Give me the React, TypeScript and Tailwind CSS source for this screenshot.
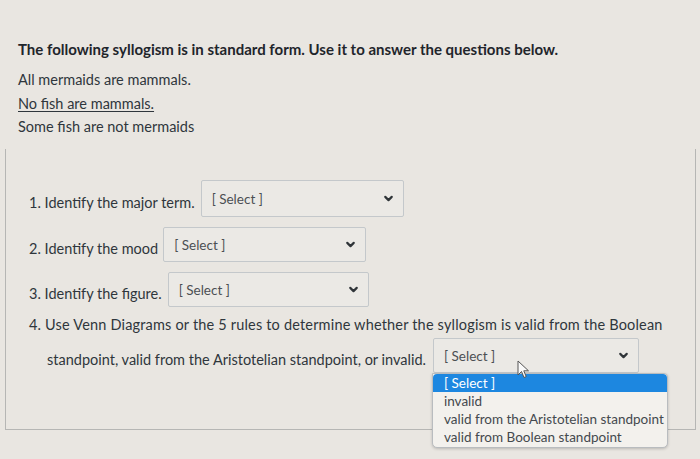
import { ChevronDown } from "lucide-react";

function SelectBox({ width, height }: { width: number; height: number }) {
  return (
    <div
      className="flex items-center justify-between border border-[#c4c8cb] bg-[#ebe9e5] rounded-[2px] pl-[10px] pr-[8px] shrink-0"
      style={{ width, height }}
    >
      <span className="text-[13.5px] text-[#4b4f53] mt-[2px]">[ Select ]</span>
      <ChevronDown size={13} strokeWidth={4} className="text-[#2f3438]" />
    </div>
  );
}

export default function App() {
  return (
    <div className="w-[700px] h-[459px] bg-[#e9e6e1] relative overflow-hidden font-['Lato',sans-serif] text-[#2f363c]">
      <div className="pt-[40px] pl-[18px]">
        <h1 className="text-[15px] font-bold text-[#1f252b] leading-[18px]">
          The following syllogism is in standard form. Use it to answer the questions below.
        </h1>
        <div className="mt-[10px] text-[14.5px] leading-[23.5px] text-[#2f363c]">
          <p>All mermaids are mammals.</p>
          <p className="underline underline-offset-2">No fish are mammals.</p>
          <p>Some fish are not mermaids</p>
        </div>
      </div>

      <div className="ml-[5px] w-[691px] mt-[10px] h-[281px] border-l border-r border-b border-[#b6b6b4] pl-[23px] pt-[31px] text-[14.5px]">
        <div className="flex items-center gap-[6px]">
          <span className="mt-[10px]">1. Identify the major term.</span>
          <SelectBox width={203} height={37} />
        </div>
        <div className="flex items-center gap-[5px] mt-[10px]">
          <span className="mt-[10px]">2. Identify the mood</span>
          <SelectBox width={203} height={35} />
        </div>
        <div className="flex items-center gap-[6px] mt-[10px]">
          <span className="mt-[10px]">3. Identify the figure.</span>
          <SelectBox width={201} height={35} />
        </div>
        <p className="mt-[8px] leading-[20px] tracking-[0.18px]">
          4. Use Venn Diagrams or the 5 rules to determine whether the syllogism is valid from the Boolean
        </p>
        <div className="flex items-center gap-[7px] mt-[3px] pl-[18px]">
          <span className="mt-[10px]">standpoint, valid from the Aristotelian standpoint, or invalid.</span>
          <div className="relative">
            <SelectBox width={206} height={35} />
            <div className="absolute left-[-1px] top-[35px] w-[236px] z-10 bg-[#f3f1ed] border border-[#b9bcbf] rounded-b-[5px] rounded-tr-[4px] shadow-[0_1px_3px_rgba(0,0,0,0.2)] overflow-hidden text-[13.5px] leading-[18px] text-[#44494e] whitespace-nowrap">
              <div className="bg-[#1d87e0] text-white pl-[11px] h-[18px] rounded-t-[4px]">[ Select ]</div>
              <div className="pl-[11px]">invalid</div>
              <div className="pl-[11px]">valid from the Aristotelian standpoint</div>
              <div className="pl-[11px] pb-[1px]">valid from Boolean standpoint</div>
            </div>
          </div>
        </div>
      </div>

      <svg className="absolute left-[517px] top-[360px] z-20" width="14" height="20" viewBox="0 0 14 20">
        <path d="M1 1 L1 15 L4.5 11.5 L7 17.5 L9.2 16.6 L6.8 10.8 L11.5 10.8 Z" fill="#fafafa" stroke="#555" strokeWidth="1" strokeLinejoin="round" />
      </svg>
    </div>
  );
}
